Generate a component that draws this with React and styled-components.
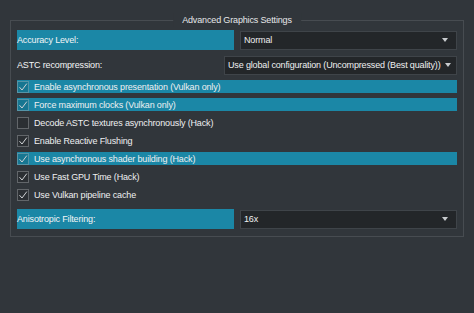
import React from "react";
import styled, { createGlobalStyle } from "styled-components";

const GlobalStyle = createGlobalStyle`
  html, body {
    margin: 0;
    padding: 0;
    background: #31363b;
  }
  body {
    font-family: "Liberation Sans", Arial, sans-serif;
    font-size: 9px;
    letter-spacing: -0.15px;
    color: #eff0f1;
  }
`;

const checks = [
  { label: "Enable asynchronous presentation (Vulkan only)", checked: true, active: true },
  { label: "Force maximum clocks (Vulkan only)", checked: true, active: true },
  { label: "Decode ASTC textures asynchronously (Hack)", checked: false },
  { label: "Enable Reactive Flushing", checked: true },
  { label: "Use asynchronous shader building (Hack)", checked: true, active: true },
  { label: "Use Fast GPU Time (Hack)", checked: true },
  { label: "Use Vulkan pipeline cache", checked: true },
];

function Check({ checked }) {
  return (
    <Box>
      {checked && (
        <svg width="10" height="10" viewBox="0 0 10 10">
          <path d="M1.5 5.2 L4 8 L8.8 1.6" fill="none" stroke="#cfd2d5" strokeWidth="1" />
        </svg>
      )}
    </Box>
  );
}

function Combo({ value }) {
  return (
    <Select>
      <span>{value}</span>
      <Arrow />
    </Select>
  );
}

function App() {
  return (
    <>
      <GlobalStyle />
      <Page>
        <Group>
          <Title>Advanced Graphics Settings</Title>
          <Row>
            <Label active>Accuracy Level:</Label>
            <Combo value="Normal" />
          </Row>
          <Row wide>
            <Label>ASTC recompression:</Label>
            <Combo value="Use global configuration (Uncompressed (Best quality))" />
          </Row>
          {checks.map((c) => (
            <CheckRow key={c.label} active={c.active}>
              <Check checked={c.checked} />
              <span>{c.label}</span>
            </CheckRow>
          ))}
          <Row last>
            <Label active>Anisotropic Filtering:</Label>
            <Combo value="16x" />
          </Row>
        </Group>
      </Page>
    </>
  );
}

const Page = styled.div`
  width: 474px;
  height: 313px;
  box-sizing: border-box;
  padding: 20px 10px 0 10px;
`;

const Group = styled.div`
  position: relative;
  width: 454px;
  box-sizing: border-box;
  border: 1px solid #474c51;
  padding: 9px 6px 7px 6px;
  display: flex;
  flex-direction: column;
  gap: 5px;
`;

const Title = styled.div`
  position: absolute;
  top: -8px;
  left: 50%;
  transform: translateX(-50%);
  padding: 0 9px;
  background: #31363b;
  line-height: 14px;
  white-space: nowrap;
  color: #e6e8ea;
`;

const Row = styled.div`
  display: grid;
  grid-template-columns: ${(p) => (p.wide ? "200px 233px" : "1fr 1fr")};
  gap: ${(p) => (p.wide ? "7px" : "6px")};
  height: 20px;
  margin-top: ${(p) => (p.last ? "3px" : "0")};
`;

const Label = styled.div`
  display: flex;
  align-items: center;
  color: #f4f5f6;
  background: ${(p) => (p.active ? "#1b87a6" : "transparent")};
`;

const Select = styled.div`
  display: flex;
  align-items: center;
  justify-content: space-between;
  box-sizing: border-box;
  height: 19px;
  margin-top: 0.5px;
  padding: 0 8px 0 3px;
  background: #232629;
  border: 1px solid #3f4449;
  color: #eff0f1;
  white-space: nowrap;
  overflow: hidden;
`;

const Arrow = styled.span`
  flex: none;
  width: 0;
  height: 0;
  margin-left: 4px;
  border-left: 3px solid transparent;
  border-right: 3px solid transparent;
  border-top: 4px solid #c8cbce;
`;

const CheckRow = styled.div`
  display: flex;
  align-items: center;
  gap: 5px;
  height: 13px;
  color: #eff0f1;
  background: ${(p) => (p.active ? "#1b87a6" : "transparent")};
`;

const Box = styled.div`
  flex: none;
  width: 12px;
  height: 12px;
  box-sizing: border-box;
  display: flex;
  align-items: center;
  justify-content: center;
  border: 1px solid rgba(200, 205, 210, 0.35);
  background: rgba(0, 0, 0, 0.12);
`;

export default App;
